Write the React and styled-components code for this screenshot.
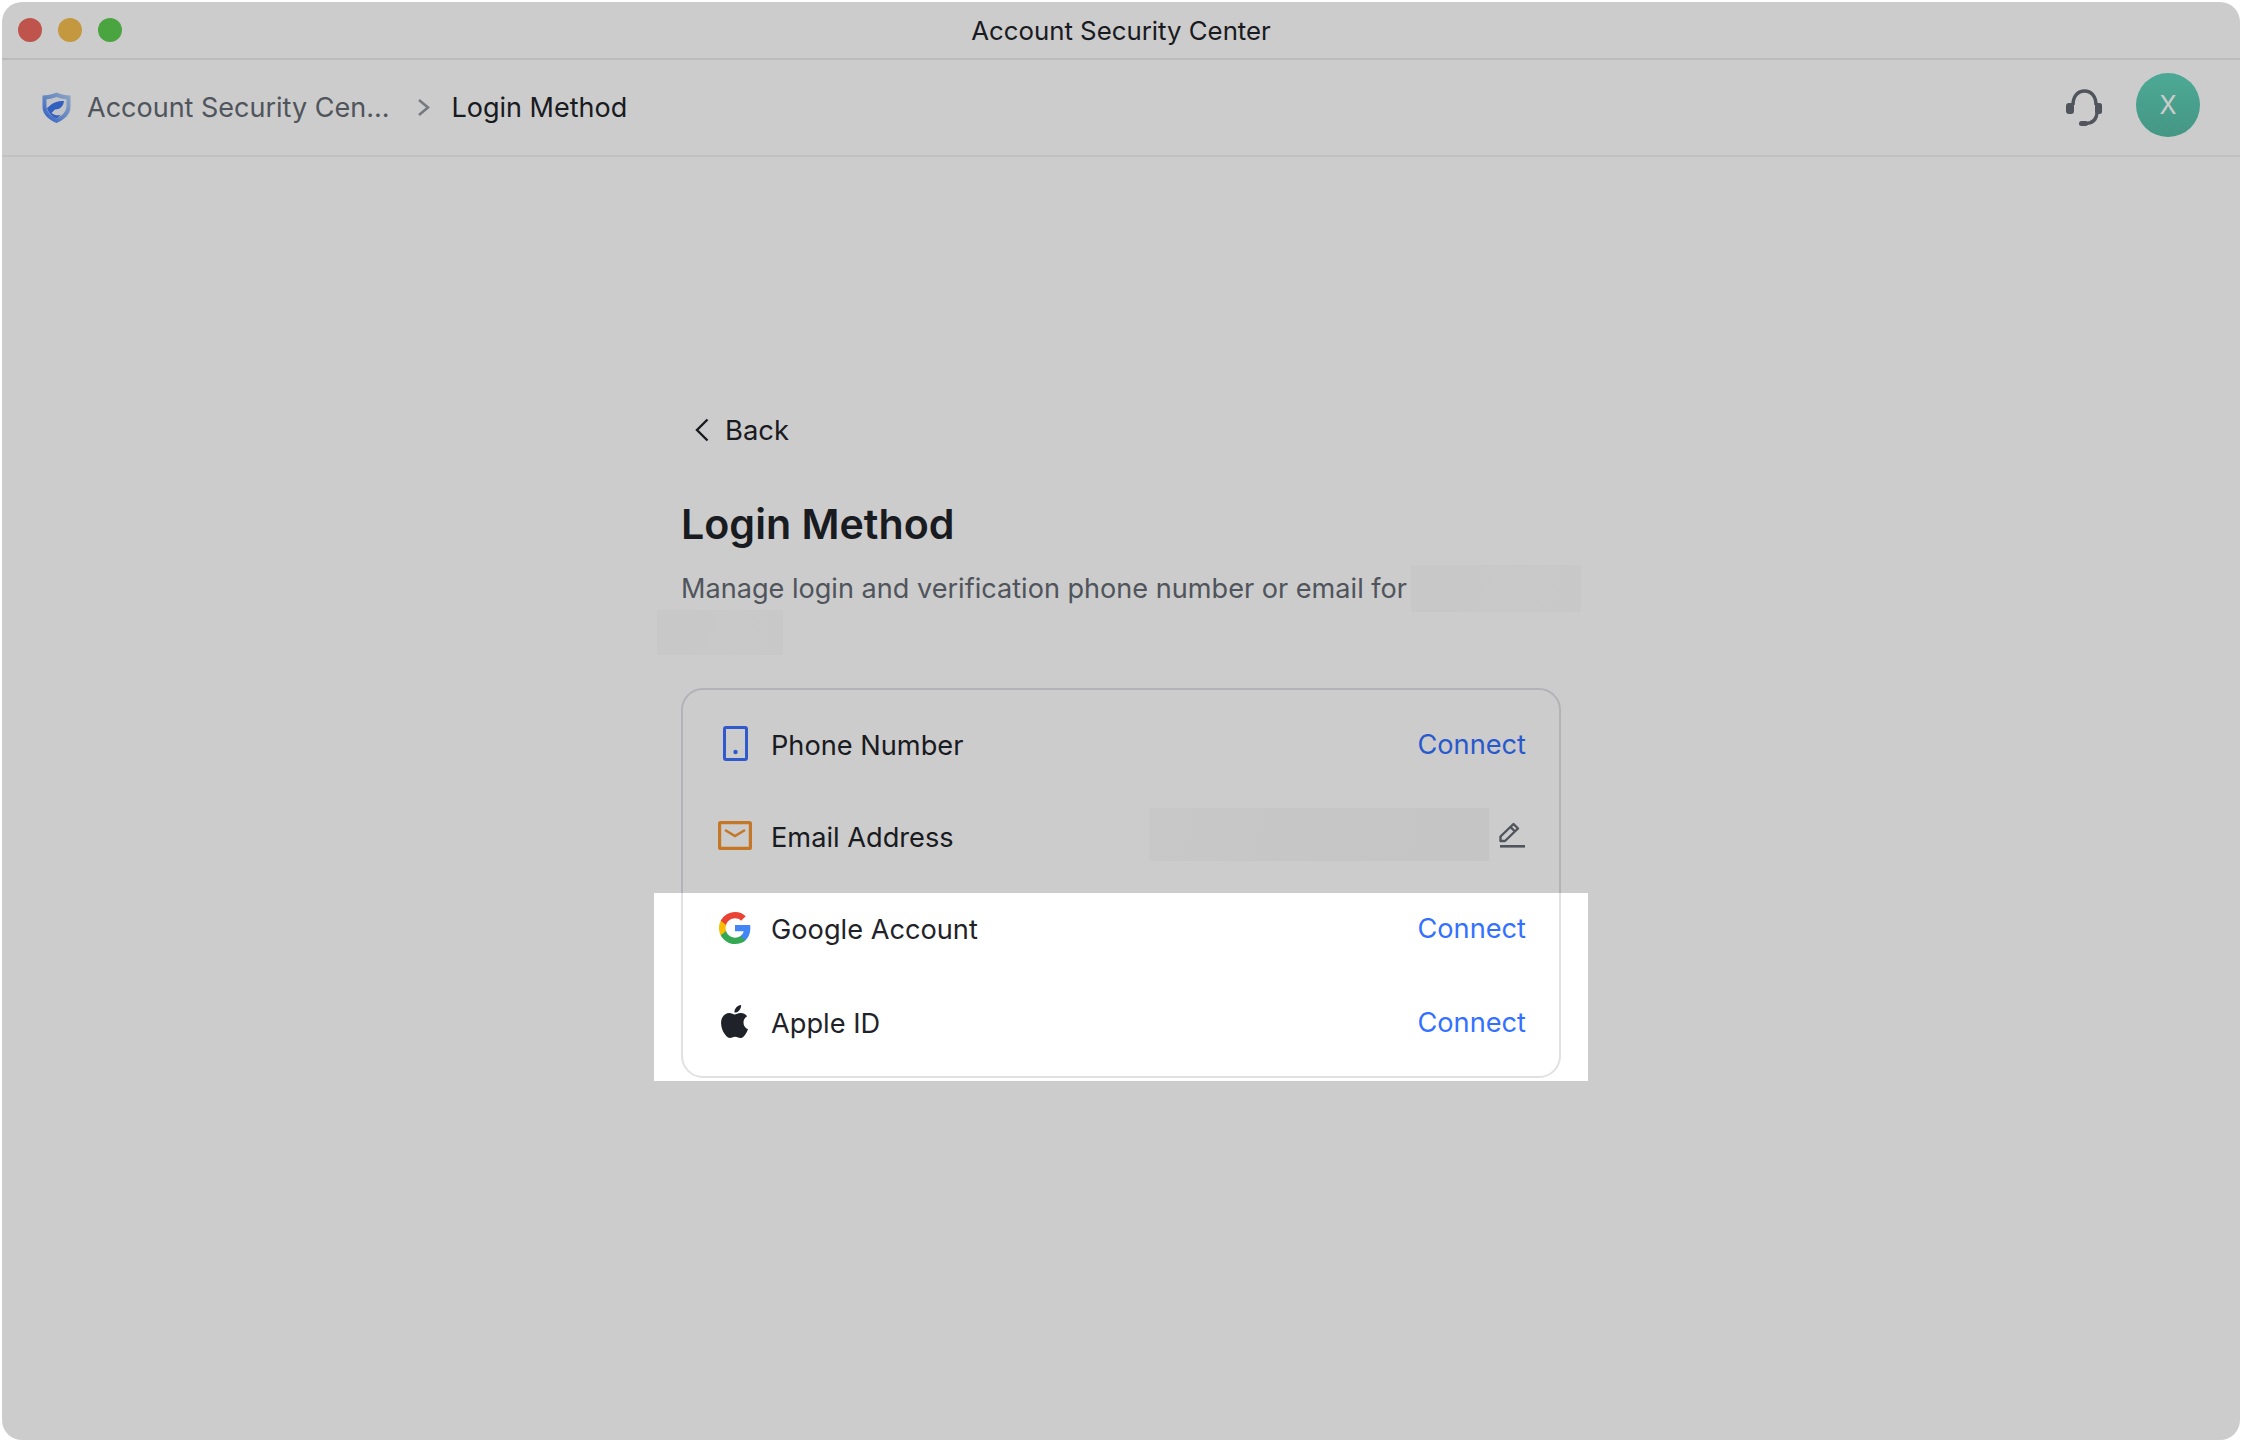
import React from "react";
import styled, { createGlobalStyle } from "styled-components";
import { SiApple } from "react-icons/si";

const GlobalStyle = createGlobalStyle`
  html, body {
    margin: 0;
    padding: 0;
    background: #ffffff;
  }
  body {
    font-family: Inter, "Noto Sans", "Liberation Sans", sans-serif;
    color: #1f2329;
  }
`;

const Page = styled.div`
  width: 2242px;
  height: 1442px;
  padding: 2px;
  box-sizing: border-box;
`;

const Window = styled.div`
  position: relative;
  height: 100%;
  display: flex;
  flex-direction: column;
  background: #ffffff;
  border-radius: 20px;
  overflow: hidden;
`;

const TitleBar = styled.div`
  flex: 0 0 56px;
  display: grid;
  grid-template-columns: 1fr auto 1fr;
  align-items: center;
  padding: 0 16px;
  border-bottom: 2px solid #eaeaea;
`;

const Lights = styled.div`
  display: flex;
  gap: 16px;
`;

const Light = styled.span`
  width: 24px;
  height: 24px;
  border-radius: 50%;
  background: ${(p) => p.$color};
`;

const WindowTitle = styled.div`
  padding-top: 2px;
  font-size: 25.8px;
  line-height: 34px;
  color: #1f2329;
`;

const Header = styled.header`
  flex: 0 0 95px;
  display: flex;
  align-items: center;
  justify-content: space-between;
  padding: 0 40px;
  border-bottom: 2px solid #f2f2f2;
`;

const Breadcrumb = styled.nav`
  display: flex;
  align-items: center;
  font-size: 27px;
  line-height: 36px;
`;

const CrumbParent = styled.span`
  margin-left: 16px;
  padding-top: 1px;
  color: #646a73;
`;

const CrumbCurrent = styled.span`
  padding-top: 1px;
`;

const CrumbChevron = styled.svg`
  width: 13px;
  height: 19px;
  margin: 0 21px 0 28px;
`;

const HeaderActions = styled.div`
  display: flex;
  align-items: center;
  gap: 34px;
`;

const Avatar = styled.div`
  width: 64px;
  height: 64px;
  margin-bottom: 6px;
  border-radius: 50%;
  display: flex;
  align-items: center;
  justify-content: center;
  background: linear-gradient(180deg, #60d4bb, #56bda5);
  color: #ffffff;
  font-size: 25px;
`;

const Main = styled.main`
  flex: 1;
  display: flex;
  flex-direction: column;
  align-items: center;
  padding-top: 256px;
`;

const Column = styled.div`
  width: 880px;
`;

const BackLink = styled.div`
  display: flex;
  align-items: center;
  gap: 16px;
  margin-left: 14px;
  font-size: 27.4px;
  line-height: 34px;
`;

const Title = styled.h1`
  margin: 49px 0 0;
  font-size: 41.2px;
  line-height: 56px;
  font-weight: 600;
`;

const SubtitleLine = styled.div`
  display: flex;
  align-items: center;
  white-space: nowrap;
  font-size: 27.1px;
  line-height: 47px;
  color: #646a73;
  margin: ${(p) => p.$margin};
`;

const Redacted = styled.span`
  display: block;
  flex: none;
  width: ${(p) => p.$width}px;
  height: ${(p) => p.$height}px;
  margin-left: ${(p) => p.$offset}px;
  background: ${(p) =>
    p.$soft
      ? "linear-gradient(100deg, #fafafa, #fcfcfc 60%, #fbfbfb)"
      : "linear-gradient(100deg, #fafafa, #f8f8f8 40%, #f7f7f8)"};
`;

const Card = styled.section`
  position: relative;
  margin-top: 33px;
  height: 390px;
  box-sizing: border-box;
  padding: 9px 0 7px;
  border: 2px solid #e0e0e5;
  border-radius: 22px;
`;

const Row = styled.div`
  display: flex;
  align-items: center;
  height: 92px;
  padding: 0 33px 0 35px;
  font-size: 27.2px;
  line-height: 36px;
  &:last-of-type {
    margin-top: 2px;
  }
`;

const IconBox = styled.span`
  flex: 0 0 34px;
  min-width: 0;
  height: 34px;
  display: flex;
  align-items: center;
  justify-content: center;
  margin: 0 19px 3px 0;
  svg {
    flex: none;
    display: block;
  }
`;

const AppleLogo = styled(SiApple)`
  margin-right: 2px;
`;

const RowLabel = styled.span`
  flex: 1;
  padding-top: 1px;
`;

const ConnectLink = styled.a`
  color: #3370ff;
`;

const EmailValue = styled.div`
  display: flex;
  align-items: center;
  margin: 0 1px 5px 0;
`;

const EditIcon = styled.svg`
  width: 26px;
  height: 26px;
  margin-left: 10px;
`;

// dims everything on the page except the rows being pointed at
const Spotlight = styled.aside`
  position: absolute;
  left: -29px;
  right: -29px;
  top: 203px;
  bottom: -5px;
  pointer-events: none;
  box-shadow: 0 0 0 3000px rgba(0, 0, 0, 0.2);
`;

const ShieldLogo = () => (
  <svg width="29" height="31" viewBox="0 0 29 31">
    <defs>
      <linearGradient id="shieldFill" x1="1" y1="0" x2="0" y2="1">
        <stop offset="0" stopColor="#b4d3f8" />
        <stop offset="0.55" stopColor="#7aa6f2" />
        <stop offset="1" stopColor="#3370ff" />
      </linearGradient>
    </defs>
    <path
      d="M14.5 0.5 C19 2.5 24 3.5 28.5 3.5 V15 C28.5 22.5 22 28 14.5 31 C7 28 0.5 22.5 0.5 15 V3.5 C5 3.5 10 2.5 14.5 0.5 Z"
      fill="url(#shieldFill)"
    />
    <path
      d="M14.5 5 C17.5 6.2 21 7 24.5 7.2 V14 C24.5 19.5 20 24 14.5 26.5 C9 24 4.5 19.5 4.5 14 V7.2 C8 7 11.5 6.2 14.5 5 Z"
      fill="#f4f6fa"
    />
    <path
      d="M7 14.5 C10 11 15 9 22 9 C21.5 14 18 17.5 13 17.5 L9.5 21 C13 23.5 16 24 19 22.5 C17.5 24.5 16 25.5 14.5 26.5 C10 24.5 6 20.5 5 16 Z"
      fill="#3f78f0"
    />
  </svg>
);

const Headset = () => (
  <svg width="36" height="38" viewBox="0 0 36 38" fill="none" stroke="#646a73">
    <path d="M7 16 C7 7 12 2 18.5 2 C25 2 30 7 30 16" strokeWidth="3.4" />
    <path d="M31 24 C30.5 30 27 34 20 34.5" strokeWidth="3.2" strokeLinecap="round" />
    <rect x="0" y="14" width="8" height="11" rx="3" fill="#646a73" stroke="none" />
    <rect x="29" y="14" width="7" height="11" rx="2.5" fill="#646a73" stroke="none" />
    <rect x="13" y="32" width="9" height="5" rx="2.5" fill="#646a73" stroke="none" />
  </svg>
);

const PhoneIcon = () => (
  <svg width="25" height="35" viewBox="0 0 25 35" fill="none">
    <rect x="1.5" y="1.5" width="22" height="32" rx="1.5" stroke="#3b70ff" strokeWidth="3" />
    <circle cx="12.5" cy="26" r="2.2" fill="#3b70ff" />
  </svg>
);

const MailIcon = () => (
  <svg width="34" height="29" viewBox="0 0 34 29" fill="none">
    <rect x="1.6" y="1.6" width="30.8" height="25.8" rx="1" stroke="#f79532" strokeWidth="3.2" />
    <path d="M7 9 L17 15 L27 9" stroke="#f79532" strokeWidth="2.6" />
  </svg>
);

const GoogleIcon = () => (
  <svg width="32" height="32" viewBox="1 1 22 22">
    <path
      fill="#4285f4"
      d="M22.56 12.25c0-.78-.07-1.53-.2-2.25H12v4.26h5.92c-.26 1.37-1.04 2.53-2.21 3.31v2.77h3.57c2.08-1.92 3.28-4.74 3.28-8.09z"
    />
    <path
      fill="#34a853"
      d="M12 23c2.97 0 5.46-.98 7.28-2.66l-3.57-2.77c-.98.66-2.23 1.06-3.71 1.06-2.86 0-5.29-1.93-6.16-4.53H2.18v2.84C3.99 20.53 7.7 23 12 23z"
    />
    <path
      fill="#fbbc05"
      d="M5.84 14.09c-.22-.66-.35-1.36-.35-2.09s.13-1.43.35-2.09V7.07H2.18C1.43 8.55 1 10.22 1 12s.43 3.45 1.18 4.93l2.85-2.22.81-.62z"
    />
    <path
      fill="#ea4335"
      d="M12 5.38c1.62 0 3.06.56 4.21 1.64l3.15-3.15C17.45 2.09 14.97 1 12 1 7.7 1 3.99 3.47 2.18 7.07l3.66 2.84c.87-2.6 3.3-4.53 6.16-4.53z"
    />
  </svg>
);

const rows = [
  { label: "Phone Number", icon: <PhoneIcon /> },
  { label: "Email Address", icon: <MailIcon />, email: true },
  { label: "Google Account", icon: <GoogleIcon /> },
  { label: "Apple ID", icon: <AppleLogo size={33} color="#1f2329" /> },
];

const App = () => {
  return (
    <Page>
      <GlobalStyle />
      <Window>
        <TitleBar>
          <Lights>
            <Light $color="#ee6a5f" />
            <Light $color="#f5bf4f" />
            <Light $color="#5dcd51" />
          </Lights>
          <WindowTitle>Account Security Center</WindowTitle>
        </TitleBar>
        <Header>
          <Breadcrumb>
            <ShieldLogo />
            <CrumbParent>Account Security Cen...</CrumbParent>
            <CrumbChevron viewBox="0 0 13 19" fill="none">
              <path d="M2 2 L11 9.5 L2 17" stroke="#9499a1" strokeWidth="2.6" />
            </CrumbChevron>
            <CrumbCurrent>Login Method</CrumbCurrent>
          </Breadcrumb>
          <HeaderActions>
            <Headset />
            <Avatar>X</Avatar>
          </HeaderActions>
        </Header>
        <Main>
          <Column>
            <BackLink>
              <svg width="14" height="24" viewBox="0 0 14 24" fill="none">
                <path d="M12.5 1.5 L2 12 L12.5 22.5" stroke="#1f2329" strokeWidth="2.4" />
              </svg>
              Back
            </BackLink>
            <Title>Login Method</Title>
            <SubtitleLine $margin="13px 0 0">
              Manage login and verification phone number or email for
              <Redacted $soft $width={170} $height={47} $offset={4} />
            </SubtitleLine>
            <SubtitleLine $margin="-2px 0 0">
              <Redacted $soft $width={126} $height={45} $offset={-24} />
            </SubtitleLine>
            <Card>
              {rows.map((row) => (
                <Row key={row.label}>
                  <IconBox>{row.icon}</IconBox>
                  <RowLabel>{row.label}</RowLabel>
                  {row.email ? (
                    <EmailValue>
                      <Redacted $width={340} $height={53} $offset={0} />
                      <EditIcon viewBox="0 0 26 26" fill="none">
                        <path
                          d="M1.5 19 V14.5 L14.5 2 L19 6.5 L6 19 Z"
                          stroke="#646a73"
                          strokeWidth="2.4"
                          strokeLinejoin="round"
                        />
                        <path d="M11.5 5 L16 9.5" stroke="#646a73" strokeWidth="2.4" />
                        <rect x="1" y="23" width="25" height="2.6" fill="#646a73" />
                      </EditIcon>
                    </EmailValue>
                  ) : (
                    <ConnectLink>Connect</ConnectLink>
                  )}
                </Row>
              ))}
              <Spotlight />
            </Card>
          </Column>
        </Main>
      </Window>
    </Page>
  );
};

export default App;
